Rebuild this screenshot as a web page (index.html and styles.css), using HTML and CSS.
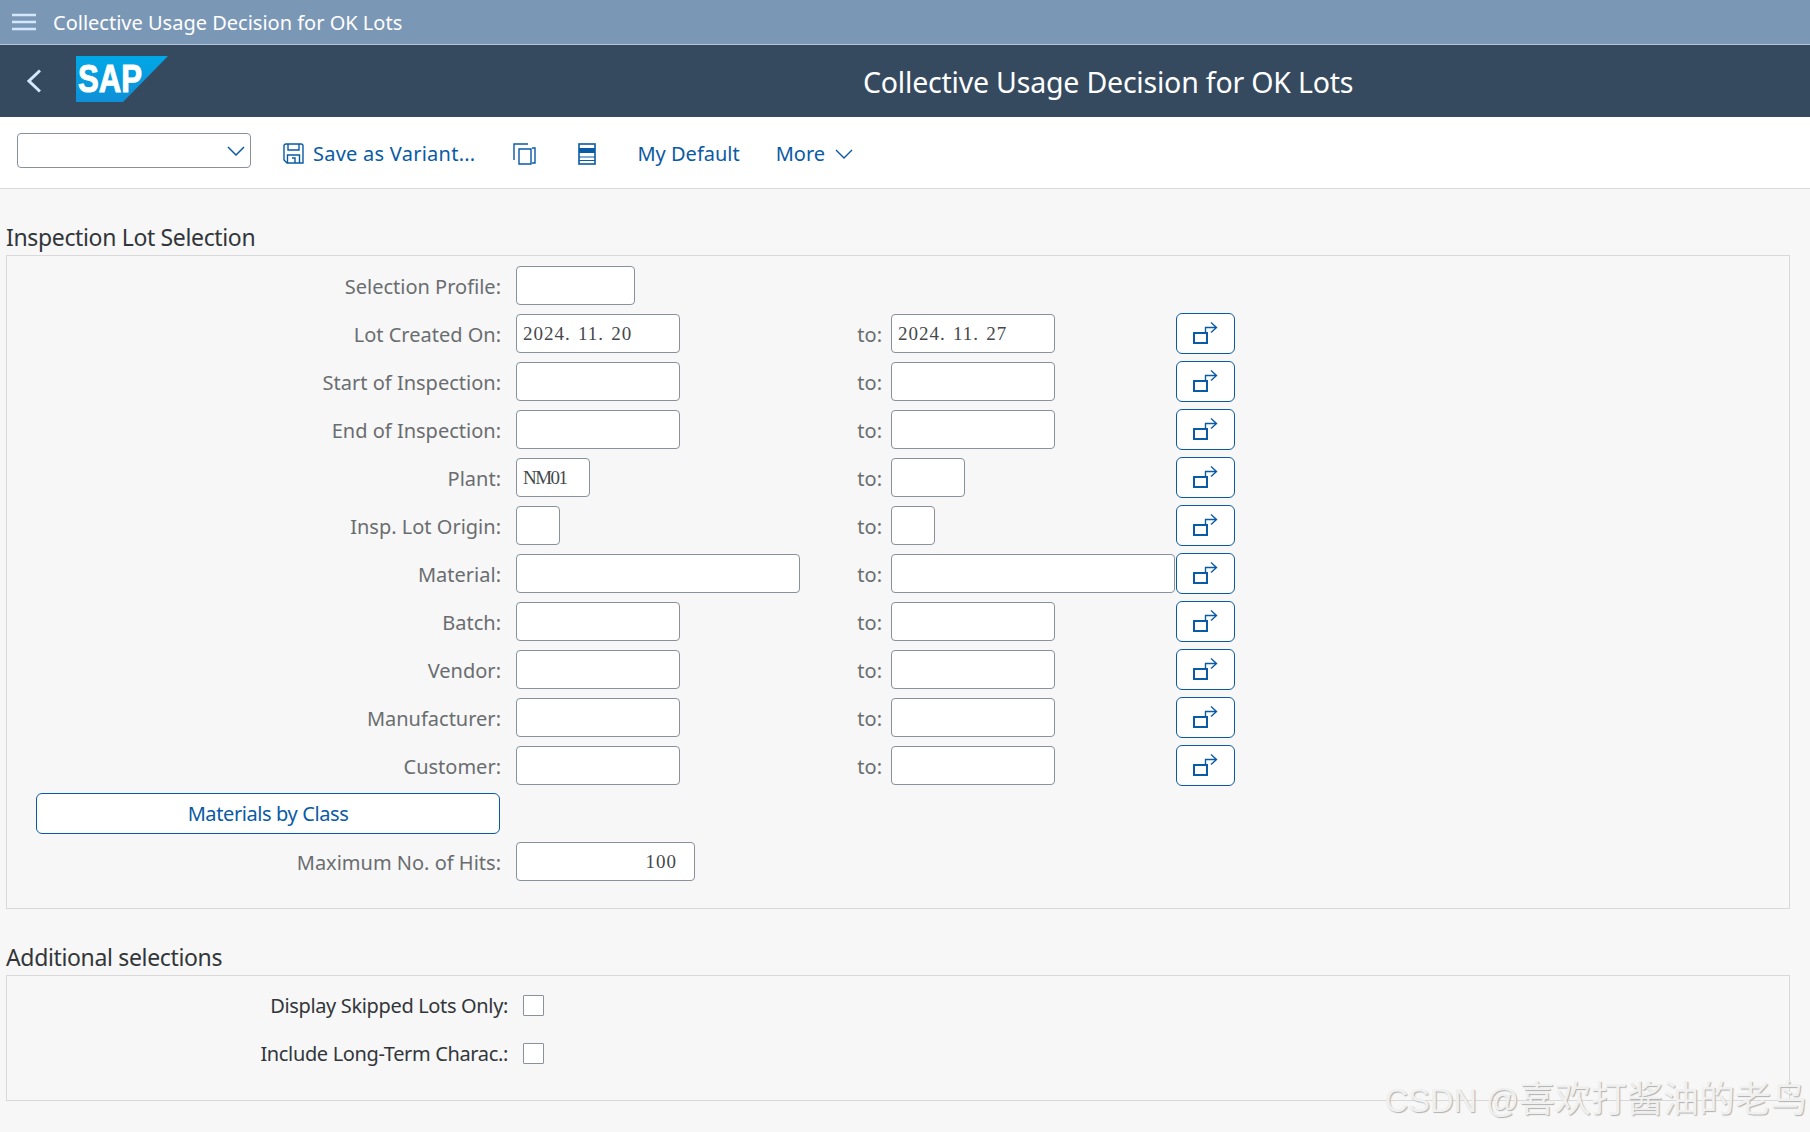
FILE: index.html
```html
<!DOCTYPE html>
<html lang="en">
<head>
<meta charset="utf-8">
<title>Collective Usage Decision for OK Lots</title>
<link rel="stylesheet" href="styles.css">
</head>
<body>
<svg class="defs" width="0" height="0" aria-hidden="true">
  <symbol id="range" viewBox="0 0 26 24">
    <rect x="2" y="12" width="13" height="10" fill="none" stroke="#0a5aa5" stroke-width="2"/>
    <path d="M13.5 12V6.5H24.5M19 1.5L24.5 6.5L19 11.5" fill="none" stroke="#0a5aa5" stroke-width="1.4"/>
  </symbol>
</svg>
<header class="topbar">
  <svg class="burger" width="24" height="18" viewBox="0 0 24 18"><path d="M0 2H24M0 9H24M0 16H24" stroke="#d1e8ff" stroke-width="2.5"/></svg>
  <span class="topbar-title">Collective Usage Decision for OK Lots</span>
</header>
<div class="shellbar">
  <svg class="back" width="14" height="24" viewBox="0 0 14 24"><path d="M13 1.5L2 12L13 22.5" fill="none" stroke="#d1e8ff" stroke-width="3"/></svg>
  <svg class="logo" width="92" height="46" viewBox="0 0 92 46">
    <defs><linearGradient id="sapblue" x1="0" y1="0" x2="0" y2="1"><stop offset="0" stop-color="#00a8e6"/><stop offset="1" stop-color="#0f8fd7"/></linearGradient></defs>
    <path d="M0 0H92L47 46H0Z" fill="url(#sapblue)"/>
    <text x="2" y="36" class="logo-text" textLength="64" lengthAdjust="spacingAndGlyphs">SAP</text>
  </svg>
  <h1 class="shell-title">Collective Usage Decision for OK Lots</h1>
</div>
<nav class="toolbar">
  <div class="variant">
    <svg width="18" height="10" viewBox="0 0 18 10"><path d="M1 1L9 9L17 1" fill="none" stroke="#0a5aa5" stroke-width="1.5"/></svg>
  </div>
  <a class="tool tool-save">
    <svg width="21" height="21" viewBox="0 0 21 21"><path d="M1 3Q1 1 3 1H18Q20 1 20 3V20H4L1 17ZM5 1V7H16V1M4.500 20V12H16.500V20M9 15H12V20" fill="none" stroke="#0a5aa5" stroke-width="1.4"/></svg>
    Save as Variant...
  </a>
  <a class="tool tool-copy">
    <svg width="23" height="22" viewBox="0 0 23 22"><path d="M1 17V1H15M6 6H18V21H6ZM19 5H22V20H19" fill="none" stroke="#0a5aa5" stroke-width="1.4"/></svg>
  </a>
  <a class="tool tool-page">
    <svg width="18" height="22" viewBox="0 0 18 22"><rect x="1" y="1" width="16" height="20" fill="none" stroke="#0a5aa5" stroke-width="1.6"/><rect x="1" y="5" width="16" height="5" fill="#0a5aa5"/><path d="M1 14H17M1 17.500H17" stroke="#0a5aa5" stroke-width="1.2"/></svg>
  </a>
  <a class="tool tool-default">My Default</a>
  <a class="tool tool-more">More
    <svg width="18" height="10" viewBox="0 0 18 10"><path d="M1 1L9 9L17 1" fill="none" stroke="#0a5aa5" stroke-width="1.4"/></svg>
  </a>
</nav>
<main class="content">
  <h2 class="section-title">Inspection Lot Selection</h2>
  <section class="panel panel-lot">
    <div class="grid">
      <label class="lbl">Selection Profile:</label>
      <input class="in w-profile" type="text"><span></span><span></span><span></span>

      <label class="lbl">Lot Created On:</label>
      <input class="in w-date" type="text" value="2024. 11. 20"><span class="to">to:</span>
      <input class="in w-date" type="text" value="2024. 11. 27"><button class="range"><svg width="26" height="24"><use href="#range"/></svg></button>

      <label class="lbl">Start of Inspection:</label>
      <input class="in w-date" type="text"><span class="to">to:</span>
      <input class="in w-date" type="text"><button class="range"><svg width="26" height="24"><use href="#range"/></svg></button>

      <label class="lbl">End of Inspection:</label>
      <input class="in w-date" type="text"><span class="to">to:</span>
      <input class="in w-date" type="text"><button class="range"><svg width="26" height="24"><use href="#range"/></svg></button>

      <label class="lbl">Plant:</label>
      <input class="in w-plant code" type="text" value="NM01"><span class="to">to:</span>
      <input class="in w-plant" type="text"><button class="range"><svg width="26" height="24"><use href="#range"/></svg></button>

      <label class="lbl">Insp. Lot Origin:</label>
      <input class="in w-origin" type="text"><span class="to">to:</span>
      <input class="in w-origin" type="text"><button class="range"><svg width="26" height="24"><use href="#range"/></svg></button>

      <label class="lbl">Material:</label>
      <input class="in w-material" type="text"><span class="to">to:</span>
      <input class="in w-material" type="text"><button class="range"><svg width="26" height="24"><use href="#range"/></svg></button>

      <label class="lbl">Batch:</label>
      <input class="in w-date" type="text"><span class="to">to:</span>
      <input class="in w-date" type="text"><button class="range"><svg width="26" height="24"><use href="#range"/></svg></button>

      <label class="lbl">Vendor:</label>
      <input class="in w-date" type="text"><span class="to">to:</span>
      <input class="in w-date" type="text"><button class="range"><svg width="26" height="24"><use href="#range"/></svg></button>

      <label class="lbl">Manufacturer:</label>
      <input class="in w-date" type="text"><span class="to">to:</span>
      <input class="in w-date" type="text"><button class="range"><svg width="26" height="24"><use href="#range"/></svg></button>

      <label class="lbl">Customer:</label>
      <input class="in w-date" type="text"><span class="to">to:</span>
      <input class="in w-date" type="text"><button class="range"><svg width="26" height="24"><use href="#range"/></svg></button>

      <button class="wide">Materials by Class</button><span></span><span></span><span></span><span></span>

      <label class="lbl">Maximum No. of Hits:</label>
      <input class="in w-hits" type="text" value="100"><span></span><span></span><span></span>
    </div>
  </section>
  <h2 class="section-title">Additional selections</h2>
  <section class="panel panel-extra">
    <div class="checks">
      <label class="lbl lbl-dark">Display Skipped Lots Only:</label><span class="box"></span>
      <label class="lbl lbl-dark">Include Long-Term Charac.:</label><span class="box"></span>
    </div>
  </section>
</main>
<div class="watermark"><span class="wm-latin">CSDN @</span>喜欢打酱油的老鸟</div>
</body>
</html>
```

FILE: styles.css
```css
* { box-sizing: border-box; }
html, body { margin: 0; height: 1132px; overflow: hidden; }
body {
  background: #f7f7f7;
  font-family: "Noto Sans", "Open Sans", sans-serif;
  font-size: 20px;
  color: #32363a;
  position: relative;
}
.defs { display: block; height: 0; }
.topbar {
  height: 45px;
  background: #7b97b6;
  border-bottom: 1px solid #b6c6d8;
  display: flex;
  align-items: center;
  padding-left: 12px;
  gap: 17px;
  color: #fff;
}
.topbar-title { font-size: 20px; white-space: nowrap; }
.shellbar {
  height: 72px;
  background: #354a5f;
  display: flex;
  align-items: flex-start;
  color: #fff;
}
.back { margin: 24px 0 0 27px; }
.logo { margin: 11px 0 0 35px; }
.logo-text {
  font-family: "Liberation Sans", sans-serif;
  font-weight: 700;
  font-size: 38px;
  fill: #fff;
  stroke: #fff;
  stroke-width: 1;
}
.shell-title {
  margin: 0 0 0 695px;
  font-size: 28.5px;
  font-weight: 400;
  letter-spacing: -0.2px;
  line-height: 74px;
  white-space: nowrap;
}
.toolbar {
  height: 72px;
  background: #fff;
  border-bottom: 1px solid #d9d9d9;
  display: flex;
  align-items: center;
  padding-left: 17px;
  color: #0a5aa5;
}
.variant {
  width: 234px;
  height: 35px;
  border: 1px solid #89919a;
  border-radius: 4px;
  display: flex;
  align-items: center;
  justify-content: flex-end;
  padding-right: 5px;
  margin-top: -4px;
}
.tool { display: flex; align-items: center; white-space: nowrap; font-size: 20px; padding-top: 2px; }
.tool-save { margin-left: 32px; gap: 9px; letter-spacing: 0.25px; }
.tool-copy { margin-left: 38px; }
.tool-page { margin-left: 42px; }
.tool-default { margin-left: 41px; }
.tool-more { margin-left: 36px; gap: 10px; }
.content { padding: 0 20px 0 6px; }
.section-title {
  margin: 32px 0 0;
  font-size: 23px;
  font-weight: 400;
  letter-spacing: -0.35px;
  line-height: 33px;
  padding-bottom: 1px;
  white-space: nowrap;
}
.panel { border: 1px solid #d9d9d9; }
.panel-lot { padding: 6px 0 22px; }
.panel-extra { padding: 15px 0 13px; }
.grid {
  display: grid;
  grid-template-columns: 509px 350px 25px 285px 60px;
  grid-auto-rows: 48px;
  align-items: start;
}
.lbl {
  height: 48px;
  line-height: 49px;
  text-align: right;
  padding-right: 15px;
  color: #6a6d70;
  white-space: nowrap;
}
.lbl-dark {
  height: 29px;
  line-height: 29px;
  color: #32363a;
  padding-right: 0;
  letter-spacing: -0.35px;
}
.to {
  height: 48px;
  line-height: 49px;
  text-align: right;
  color: #6a6d70;
  padding-right: 9px;
  margin-left: -30px;
}
.in {
  display: block;
  height: 39px;
  margin: 4px 0 0;
  padding: 0 6px;
  border: 1px solid #89919a;
  border-radius: 4px;
  background: #fff;
  font-family: "Liberation Serif", "Noto Sans CJK SC", serif;
  font-size: 19px;
  color: #45484c;
  word-spacing: 1.5px;
  letter-spacing: 1px;
}
.code { letter-spacing: -1.5px; }
.w-profile { width: 119px; }
.w-date { width: 164px; }
.w-plant { width: 74px; }
.w-origin { width: 44px; }
.w-material { width: 284px; }
.w-hits { width: 179px; text-align: right; padding-right: 17px; }
.range {
  width: 59px;
  height: 41px;
  margin: 3px 0 0;
  padding: 0 2px 2px 0;
  border: 1px solid #0a5aa5;
  border-radius: 6px;
  background: #fff;
  display: flex;
  align-items: center;
  justify-content: center;
}
.wide {
  width: 464px;
  height: 41px;
  margin: 3px 0 0 29px;
  padding: 0;
  border: 1px solid #0a5aa5;
  border-radius: 6px;
  background: #fff;
  color: #0a5aa5;
  font: inherit;
  letter-spacing: -0.4px;
  white-space: nowrap;
}
.checks {
  display: grid;
  grid-template-columns: 501px 21px;
  column-gap: 15px;
  grid-auto-rows: 48px;
  align-items: start;
}
.box {
  display: block;
  width: 21px;
  height: 21px;
  margin-top: 4px;
  border: 1.5px solid #89919a;
  border-radius: 1px;
  background: #fff;
}
.watermark {
  position: absolute;
  right: 3px;
  top: 1077px;
  font-family: "Liberation Sans", "Noto Sans CJK SC", sans-serif;
  font-size: 36px;
  line-height: 46px;
  white-space: nowrap;
  color: #f0f0f0;
  text-shadow: 1px 1px 1px #b0b0b0;
}
.wm-latin { font-size: 32.5px; }
```
